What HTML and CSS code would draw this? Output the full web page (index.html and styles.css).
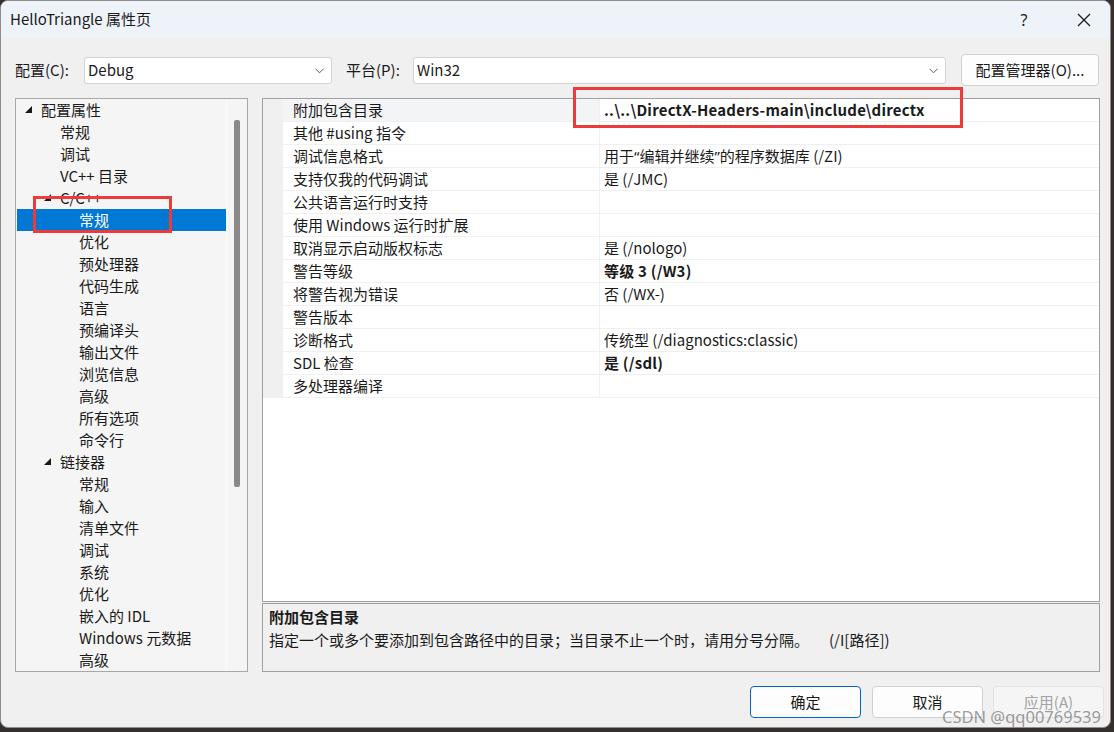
FILE: index.html
```html
<!DOCTYPE html>
<html lang="zh-CN">
<head>
<meta charset="utf-8">
<title>HelloTriangle 属性页</title>
<link rel="stylesheet" href="styles.css">
</head>
<body>
<div class="window">
  <div class="titlebar">
    <span class="title">HelloTriangle 属性页</span>
    <span class="tb-help">?</span>
    <span class="tb-close">
      <svg width="14" height="14" viewBox="0 0 14 14"><path d="M1 1 L13 13 M13 1 L1 13" stroke="#1b1b1b" stroke-width="1.3" fill="none"/></svg>
    </span>
  </div>

  <div class="config-row">
    <span class="lbl lbl-config">配置(C):</span>
    <div class="combo combo-config">
      <span>Debug</span>
      <svg width="9" height="6" viewBox="0 0 9 6"><path d="M0.5 0.8 L4.5 4.8 L8.5 0.8" stroke="#5a5a5a" stroke-width="1" fill="none"/></svg>
    </div>
    <span class="lbl lbl-platform">平台(P):</span>
    <div class="combo combo-platform">
      <span>Win32</span>
      <svg width="9" height="6" viewBox="0 0 9 6"><path d="M0.5 0.8 L4.5 4.8 L8.5 0.8" stroke="#5a5a5a" stroke-width="1" fill="none"/></svg>
    </div>
    <button class="btn btn-manager">配置管理器(O)...</button>
  </div>

  <div class="main">
    <div class="tree">
      <div class="tree-list">
        <div class="node l1"><span class="tri"><svg width="8" height="8" viewBox="0 0 8 8"><polygon points="7,0 7,7 0,7" fill="#1a1a1a"/></svg></span>配置属性</div>
        <div class="node l2">常规</div>
        <div class="node l2">调试</div>
        <div class="node l2">VC++ 目录</div>
        <div class="node l2p"><span class="tri"><svg width="8" height="8" viewBox="0 0 8 8"><polygon points="7,0 7,7 0,7" fill="#1a1a1a"/></svg></span>C/C++</div>
        <div class="node l3 selected">常规</div>
        <div class="node l3">优化</div>
        <div class="node l3">预处理器</div>
        <div class="node l3">代码生成</div>
        <div class="node l3">语言</div>
        <div class="node l3">预编译头</div>
        <div class="node l3">输出文件</div>
        <div class="node l3">浏览信息</div>
        <div class="node l3">高级</div>
        <div class="node l3">所有选项</div>
        <div class="node l3">命令行</div>
        <div class="node l2p"><span class="tri"><svg width="8" height="8" viewBox="0 0 8 8"><polygon points="7,0 7,7 0,7" fill="#1a1a1a"/></svg></span>链接器</div>
        <div class="node l3">常规</div>
        <div class="node l3">输入</div>
        <div class="node l3">清单文件</div>
        <div class="node l3">调试</div>
        <div class="node l3">系统</div>
        <div class="node l3">优化</div>
        <div class="node l3">嵌入的 IDL</div>
        <div class="node l3">Windows 元数据</div>
        <div class="node l3">高级</div>
      </div>
      <div class="scrollbar"><div class="thumb"></div></div>
    </div>

    <div class="right">
      <div class="grid">
        <div class="row sel"><span class="gut"></span><span class="name">附加包含目录</span><span class="val bold">..\..\DirectX-Headers-main\include\directx</span></div>
        <div class="row"><span class="gut"></span><span class="name">其他 #using 指令</span><span class="val"></span></div>
        <div class="row"><span class="gut"></span><span class="name">调试信息格式</span><span class="val">用于<span class="q">“</span>编辑并继续<span class="q">”</span>的程序数据库 (/ZI)</span></div>
        <div class="row"><span class="gut"></span><span class="name">支持仅我的代码调试</span><span class="val">是 (/JMC)</span></div>
        <div class="row"><span class="gut"></span><span class="name">公共语言运行时支持</span><span class="val"></span></div>
        <div class="row"><span class="gut"></span><span class="name">使用 Windows 运行时扩展</span><span class="val"></span></div>
        <div class="row"><span class="gut"></span><span class="name">取消显示启动版权标志</span><span class="val">是 (/nologo)</span></div>
        <div class="row"><span class="gut"></span><span class="name">警告等级</span><span class="val bold">等级 3 (/W3)</span></div>
        <div class="row"><span class="gut"></span><span class="name">将警告视为错误</span><span class="val">否 (/WX-)</span></div>
        <div class="row"><span class="gut"></span><span class="name">警告版本</span><span class="val"></span></div>
        <div class="row"><span class="gut"></span><span class="name">诊断格式</span><span class="val">传统型 (/diagnostics:classic)</span></div>
        <div class="row"><span class="gut"></span><span class="name">SDL 检查</span><span class="val bold">是 (/sdl)</span></div>
        <div class="row"><span class="gut"></span><span class="name">多处理器编译</span><span class="val"></span></div>
      </div>
      <div class="desc">
        <div class="desc-title">附加包含目录</div>
        <div class="desc-text">指定一个或多个要添加到包含路径中的目录；当目录不止一个时，请用分号分隔。<span class="desc-flag">(/I[路径])</span></div>
      </div>
    </div>
  </div>

  <div class="footer">
    <button class="btn btn-ok">确定</button>
    <button class="btn btn-cancel">取消</button>
    <button class="btn btn-apply">应用(A)</button>
  </div>

  <div class="mark mark-tree"></div>
  <div class="mark mark-value"></div>
  <div class="watermark">CSDN @qq00769539</div>
</div>
</body>
</html>
```

FILE: styles.css
```css
* { box-sizing: border-box; }
html, body {
  margin: 0;
  padding: 0;
  width: 1114px;
  height: 732px;
  overflow: hidden;
  background: #35302e;
}
body {
  font-family: "Noto Sans CJK SC", "Noto Sans", sans-serif;
  font-size: 15px;
  color: #1a1a1a;
}
.window {
  position: relative;
  width: 1111px;
  height: 728px;
  background: #f0f0f0;
  border: 1px solid #8e8e8e;
  border-radius: 8px;
  overflow: hidden;
  display: flex;
  flex-direction: column;
}
.titlebar {
  height: 37px;
  flex: none;
  background: #eef3f9;
  display: flex;
  align-items: center;
  padding-left: 9px;
}
.title {
  flex: 1;
  line-height: 20px;
  margin-top: -1px;
}
.tb-help {
  width: 14px;
  text-align: center;
  margin-right: 46px;
  font-size: 16px;
  line-height: 20px;
  font-family: "Noto Sans", sans-serif;
}
.tb-close {
  display: flex;
  margin-right: 19px;
  margin-top: 1px;
}
.config-row {
  flex: none;
  display: flex;
  align-items: center;
  height: 32px;
  margin-top: 16px;
  padding-left: 14px;
}
.lbl { line-height: 20px; flex: none; }
.lbl-config { width: 69px; }
.lbl-platform { width: 67px; margin-left: 14px; }
.combo {
  flex: none;
  height: 27px;
  background: #ffffff;
  border: 1px solid #d4d4d4;
  border-radius: 3px;
  display: flex;
  align-items: center;
  justify-content: space-between;
  padding: 0 7px 0 3px;
  line-height: 20px;
}
.combo svg { margin-top: 1px; }
.combo-config { width: 248px; }
.combo-platform { width: 533px; }
.btn {
  font-family: "Noto Sans CJK SC", "Noto Sans", sans-serif;
  font-size: 15px;
  color: #1a1a1a;
  background: #fdfdfd;
  border: 1px solid #d0d0d0;
  border-radius: 4px;
  height: 32px;
  padding: 0;
  line-height: 20px;
}
.btn-manager { width: 138px; margin-left: 15px; }

.main {
  flex: none;
  display: flex;
  margin-top: 12px;
  padding-left: 14px;
  gap: 14px;
  height: 574px;
}
.tree {
  width: 233px;
  height: 574px;
  background: #f5f5f5;
  border: 1px solid #a8a8a8;
  display: flex;
  overflow: hidden;
}
.tree-list {
  width: 210px;
  flex: none;
  overflow: hidden;
}
.node {
  height: 22px;
  line-height: 22px;
  white-space: nowrap;
  display: flex;
  align-items: center;
}
.node .tri {
  display: inline-flex;
  width: 16px;
  margin-top: -1px;
}
.l1 { padding-left: 9px; }
.l2 { padding-left: 44px; }
.l2p { padding-left: 28px; }
.l3 { padding-left: 63px; }
.node.selected {
  background: #0078d4;
  color: #ffffff;
  margin-left: 1px;
  padding-left: 62px;
}
.scrollbar {
  width: 21px;
  flex: none;
  border-left: 1px solid #fafafa;
  padding-top: 21px;
  display: flex;
  justify-content: center;
}
.thumb {
  width: 6px;
  height: 367px;
  background: #898989;
  border-radius: 2px;
  margin-left: -1px;
}

.right {
  width: 838px;
  display: flex;
  flex-direction: column;
  gap: 1px;
}
.grid {
  height: 504px;
  background: #ffffff;
  border: 1px solid #a0a0a0;
  flex: none;
}
.row {
  display: flex;
  height: 23px;
  border-bottom: 1px solid #f0f0f0;
}
.gut {
  width: 20px;
  flex: none;
  background: #f0f0f0;
}
.name {
  width: 316px;
  flex: none;
  padding-left: 10px;
  line-height: 22px;
  white-space: nowrap;
}
.row.sel .name { background: #f3f4f6; }
.val {
  flex: 1;
  border-left: 1px solid #f0f0f0;
  padding-left: 4px;
  line-height: 22px;
  white-space: nowrap;
}
.val .q { font-family: "Noto Sans", sans-serif; }
.bold { font-weight: 700; letter-spacing: 0.22px; }

.desc {
  flex: 1;
  background: #f0f0f0;
  border: 1px solid #a0a0a0;
  padding: 1px 0 0 6px;
}
.desc-title {
  font-weight: 700;
  line-height: 23px;
}
.desc-text {
  line-height: 23px;
  white-space: nowrap;
}
.desc-flag { margin-left: 20px; }

.footer {
  flex: none;
  display: flex;
  justify-content: flex-end;
  margin-top: 14px;
  padding-right: 6px;
  gap: 11px;
}
.footer .btn { width: 111px; }
.btn-ok { border-color: #0067c0; }
.btn-apply {
  background: #f5f5f5;
  border-color: #e3e3e3;
  color: #a3a3a3;
  margin-left: -1px;
}

.mark {
  position: absolute;
  border: 3px solid #ec3b3b;
  pointer-events: none;
}
.mark-tree { left: 32px; top: 195px; width: 139px; height: 37px; }
.mark-value { left: 572px; top: 86px; width: 390px; height: 41px; }
.watermark {
  position: absolute;
  left: 941px;
  top: 705px;
  font-family: "Noto Sans", "Liberation Sans", sans-serif;
  font-size: 16.5px;
  line-height: 22px;
  color: rgba(95, 95, 95, 0.62);
  white-space: nowrap;
}
```
